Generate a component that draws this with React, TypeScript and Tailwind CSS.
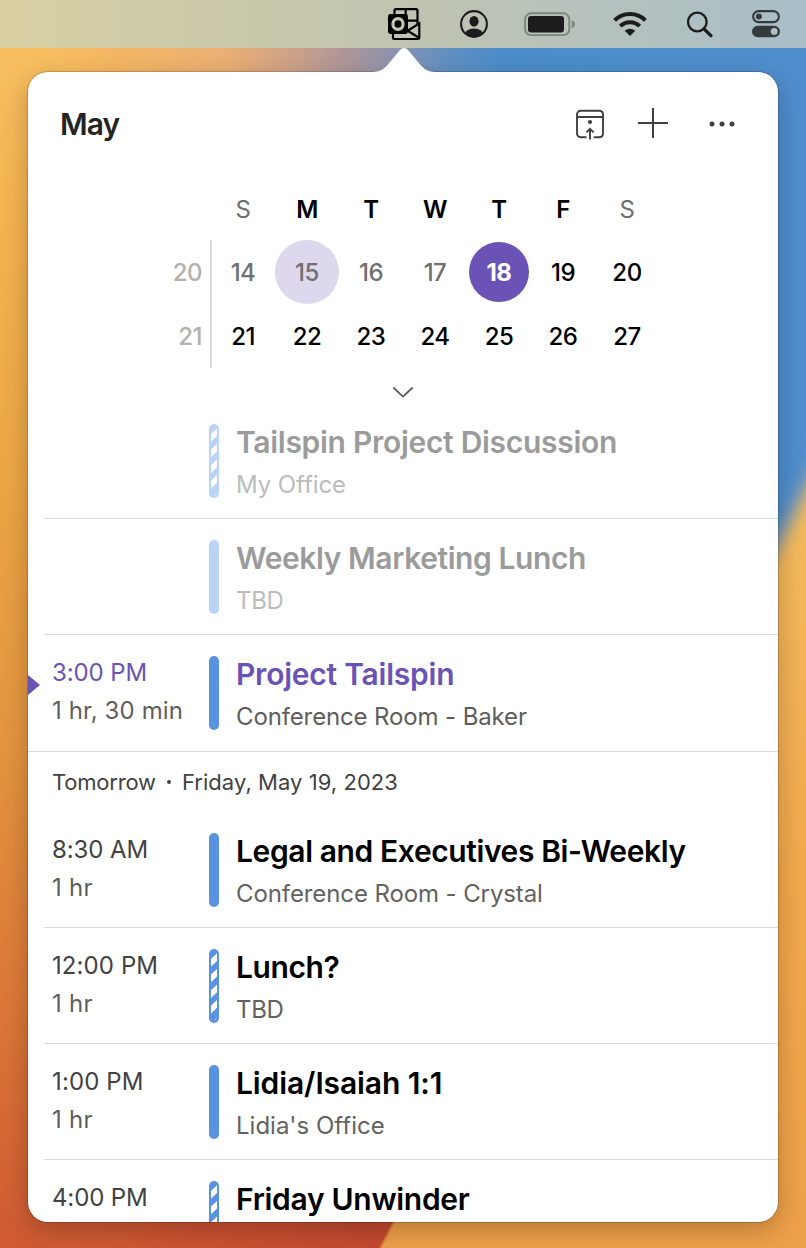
import React from "react";

type Bar = "solid" | "striped";

interface CalendarEvent {
  title: string;
  titleTracking: string;
  place: string;
  placeTracking?: string;
  time?: string;
  timeTracking?: string;
  duration?: string;
  durationTracking?: string;
  bar: Bar;
  state: "past" | "current" | "upcoming";
}

const today: CalendarEvent[] = [
  { title: "Tailspin Project Discussion", titleTracking: "tracking-[-0.29px]", place: "My Office", placeTracking: "tracking-[-0.09px]", bar: "striped", state: "past" },
  { title: "Weekly Marketing Lunch", titleTracking: "tracking-[-0.41px]", place: "TBD", placeTracking: "tracking-[-0.3px]", bar: "solid", state: "past" },
  {
    title: "Project Tailspin", titleTracking: "tracking-[-0.23px]",
    place: "Conference Room - Baker", placeTracking: "tracking-[-0.13px]",
    time: "3:00 PM", timeTracking: "tracking-[-0.1px]",
    duration: "1 hr, 30 min", durationTracking: "tracking-[0.12px]",
    bar: "solid", state: "current",
  },
];

const tomorrow: CalendarEvent[] = [
  {
    title: "Legal and Executives Bi-Weekly", titleTracking: "tracking-[-0.39px]",
    place: "Conference Room - Crystal", placeTracking: "tracking-[-0.1px]",
    time: "8:30 AM", timeTracking: "tracking-[-0.09px]", duration: "1 hr", durationTracking: "tracking-[0.25px]",
    bar: "solid", state: "upcoming",
  },
  {
    title: "Lunch?", titleTracking: "tracking-[-0.4px]",
    place: "TBD", placeTracking: "tracking-[-0.3px]",
    time: "12:00 PM", timeTracking: "tracking-[0.1px]", duration: "1 hr", durationTracking: "tracking-[0.25px]",
    bar: "striped", state: "upcoming",
  },
  {
    title: "Lidia/Isaiah 1:1", titleTracking: "tracking-[-0.1px]",
    place: "Lidia's Office",
    time: "1:00 PM", timeTracking: "tracking-[0.12px]", duration: "1 hr", durationTracking: "tracking-[0.25px]",
    bar: "solid", state: "upcoming",
  },
  {
    title: "Friday Unwinder", titleTracking: "tracking-[-0.3px]",
    place: "",
    time: "4:00 PM", timeTracking: "tracking-[-0.13px]", duration: "",
    bar: "striped", state: "upcoming",
  },
];

function Wallpaper() {
  return (
    <svg className="absolute inset-0" width="806" height="1248" viewBox="0 0 806 1248" aria-hidden="true">
      <defs>
        <linearGradient id="warm" x1="0" y1="0" x2="0" y2="1">
          <stop offset="0" stopColor="#f8c265" />
          <stop offset="0.16" stopColor="#f5b451" />
          <stop offset="0.4" stopColor="#eba544" />
          <stop offset="0.6" stopColor="#e3943f" />
          <stop offset="0.8" stopColor="#dc7838" />
          <stop offset="1" stopColor="#cf5a32" />
        </linearGradient>
        <linearGradient id="top" x1="0" y1="0" x2="1" y2="0">
          <stop offset="0.05" stopColor="#f6bb62" stopOpacity="0" />
          <stop offset="0.14" stopColor="#f4b664" />
          <stop offset="0.28" stopColor="#eab073" />
          <stop offset="0.36" stopColor="#cfa288" />
          <stop offset="0.43" stopColor="#ad9699" />
          <stop offset="0.5" stopColor="#8793b2" />
          <stop offset="0.55" stopColor="#6290c0" />
          <stop offset="0.62" stopColor="#4c8dca" />
          <stop offset="1" stopColor="#4f8ecd" />
        </linearGradient>
        <linearGradient id="sun" x1="0" y1="0" x2="0" y2="1">
          <stop offset="0" stopColor="#f5bd60" />
          <stop offset="0.5" stopColor="#f2a84c" />
          <stop offset="1" stopColor="#ee9f48" />
        </linearGradient>
        <linearGradient id="ember" x1="0" y1="0" x2="1" y2="0">
          <stop offset="0" stopColor="#d05d33" stopOpacity="0" />
          <stop offset="0.3" stopColor="#cc5331" />
          <stop offset="0.9" stopColor="#be452e" />
        </linearGradient>
        <filter id="soft" x="-20%" y="-20%" width="140%" height="140%">
          <feGaussianBlur stdDeviation="9" />
        </filter>
        <filter id="edge">
          <feGaussianBlur stdDeviation="1.2" />
        </filter>
      </defs>
      <rect width="806" height="1248" fill="url(#warm)" />
      <rect x="0" y="0" width="806" height="100" fill="url(#top)" />
      <rect x="600" y="90" width="206" height="560" fill="#4f8dcd" />
      <path d="M700 680 L778 545 L830 440 L860 1300 L700 1300Z" fill="url(#sun)" filter="url(#soft)" />
      <rect x="28" y="1190" width="500" height="58" fill="url(#ember)" />
      <path d="M410 1190 L374 1260 L840 1260 L840 1190Z" fill="#eea048" filter="url(#edge)" />
    </svg>
  );
}

function MenuBar() {
  return (
    <div className="relative flex h-12 items-center justify-end bg-linear-to-r from-[#d8d0a2] via-[#c0c4b0] to-[#a9bec9] pr-[26px] text-[#1c1c1c]">
      <svg className="mr-[39px]" width="34" height="34" viewBox="0 0 34 34" fill="none" stroke="#000" strokeWidth="2.2">
        <path d="M7.5 8V3.7Q7.5 2.2 9 2.2H29Q30.5 2.2 30.5 3.7V17M18.7 2.5V14M18 13.7H30.5" />
        <path d="M6 26V31Q6 32 7 32H31Q32.3 32 32.3 31V16.5L20.5 23.7L32 30.8" />
        <rect x="1" y="7" width="20" height="20" rx="2.4" fill="#000" stroke="none" />
        <ellipse cx="11" cy="17" rx="5.1" ry="5.4" stroke="#c2c6b1" strokeWidth="3.2" />
      </svg>
      <svg className="mr-9" width="28" height="28" viewBox="0 0 28 28">
        <defs>
          <clipPath id="head"><circle cx="14" cy="14" r="12.5" /></clipPath>
        </defs>
        <circle cx="14" cy="14" r="12.9" fill="none" stroke="currentColor" strokeWidth="2.1" />
        <g fill="currentColor" clipPath="url(#head)">
          <ellipse cx="14" cy="11.2" rx="4.6" ry="5.2" />
          <ellipse cx="14" cy="25.3" rx="9.8" ry="6.9" />
        </g>
      </svg>
      <svg className="mr-9" width="52" height="26" viewBox="0 0 52 26">
        <rect x="1.1" y="2.3" width="44.2" height="21.8" rx="6" fill="none" stroke="#7d857d" strokeWidth="1.9" />
        <rect x="4" y="5" width="36" height="16.4" rx="3" fill="currentColor" />
        <path d="M47.8 9.2Q51 10.5 51 13.2T47.8 17.2Z" fill="#7d857d" />
      </svg>
      <svg className="mr-[38px]" width="36" height="26" viewBox="0 0 36 26" fill="none" stroke="currentColor" strokeWidth="4">
        <path d="M2.6 9.4A21.8 21.8 0 0 1 33.4 9.4" />
        <path d="M8.3 15.2A13.7 13.7 0 0 1 27.7 15.2" />
        <path d="M18 25L12.7 19.7Q18 15.6 23.3 19.7Z" fill="currentColor" stroke="none" />
      </svg>
      <svg className="mr-[38px]" width="28" height="28" viewBox="0 0 28 28" fill="none" stroke="currentColor">
        <circle cx="11.3" cy="12" r="9.3" strokeWidth="2.3" />
        <path d="M18 18.8L24.9 25.7" strokeWidth="3.3" strokeLinecap="round" />
      </svg>
      <svg width="28" height="28" viewBox="0 0 28 28" className="text-[#353b3d]">
        <rect x="1.1" y="1.1" width="25.8" height="11" rx="5.5" fill="none" stroke="currentColor" strokeWidth="2.1" />
        <circle cx="6.9" cy="6.6" r="3" fill="currentColor" />
        <rect x="0" y="15.7" width="28" height="11.5" rx="5.75" fill="currentColor" />
        <circle cx="22.2" cy="21.4" r="3.4" fill="#b0c0c4" />
      </svg>
    </div>
  );
}

function PanelHeader() {
  return (
    <header className="flex h-26 shrink-0 items-center justify-between pr-[42px] pl-8 text-[#3f3f3f]">
      <h1 className="text-[30px] leading-9 font-semibold tracking-[-1px] text-[#242424]">May</h1>
      <div className="flex items-center">
        <svg className="mr-[33px]" width="30" height="32" viewBox="0 0 30 32" fill="none" stroke="currentColor" strokeWidth="1.9">
          <path d="M11.5 29.2H6Q2 29.2 2 25.2V6.8Q2 2.8 6 2.8H24Q28 2.8 28 6.8V25.2Q28 29.2 24 29.2H18.7M2 9H28" />
          <path d="M15 31.5V21.2M11.4 24.4L15 20.8L18.6 24.4" />
          <circle cx="15" cy="14" r="2.1" fill="currentColor" stroke="none" />
        </svg>
        <svg className="mr-10" width="30" height="32" viewBox="0 0 30 32" stroke="currentColor" strokeWidth="2">
          <path d="M0 15H30M15 0V30" />
        </svg>
        <svg width="28" height="32" viewBox="0 0 28 32" fill="currentColor">
          <circle cx="4" cy="16" r="2.5" />
          <circle cx="14" cy="16" r="2.5" />
          <circle cx="24" cy="16" r="2.5" />
        </svg>
      </div>
    </header>
  );
}

function Week({ number, children }: { number: number; children: React.ReactNode }) {
  return (
    <div className="flex h-16">
      <div className="flex w-[184px] items-center justify-end border-r-2 border-[#dcdcdc] pt-0.5 pr-2 text-[#b3b0ad]">{number}</div>
      <div className="-ml-px grid grid-cols-[repeat(7,64px)] place-items-center *:pt-0.5">{children}</div>
    </div>
  );
}

function MonthGrid() {
  return (
    <section className="shrink-0 text-[24px] leading-none font-medium tracking-[-0.5px] text-black">
      <div className="ml-[183px] grid h-16 grid-cols-[repeat(7,64px)] place-items-center pt-[3px] font-semibold">
        <span className="font-normal text-[#6e6e6e]">S</span>
        <span>M</span>
        <span>T</span>
        <span>W</span>
        <span>T</span>
        <span>F</span>
        <span className="font-normal text-[#6e6e6e]">S</span>
      </div>
      <Week number={20}>
        <span className="font-[450] text-[#707070]">14</span>
        <span className="flex size-16 items-center justify-center rounded-full bg-[#ddd8ee] font-[450] text-[#707070]">15</span>
        <span className="font-[450] text-[#707070]">16</span>
        <span className="font-[450] text-[#707070]">17</span>
        <span className="flex size-15 items-center justify-center rounded-full bg-[#6b53b5] font-bold text-white">18</span>
        <span>19</span>
        <span>20</span>
      </Week>
      <Week number={21}>
        <span>21</span>
        <span>22</span>
        <span>23</span>
        <span>24</span>
        <span>25</span>
        <span>26</span>
        <span>27</span>
      </Week>
      <div className="flex h-[35px] items-start justify-center pt-[18px]">
        <svg width="22" height="12" viewBox="0 0 22 12" fill="none" stroke="#5c5c5c" strokeWidth="1.8">
          <path d="M1.3 1.5L11 10.6L20.7 1.5" />
        </svg>
      </div>
    </section>
  );
}

const stripeStarts = [0, 15.6, 31.2, 46.8];

function EventBar({ kind, past }: { kind: Bar; past: boolean }) {
  return (
    <svg
      className={past ? "mt-[21px] shrink-0 text-[#bbd3f5]" : "mt-[21px] shrink-0 text-[#5893e0]"}
      width="10"
      height="74"
      viewBox="0 0 10 74"
    >
      <rect width="10" height="74" rx="5" fill="currentColor" />
      {kind === "striped" && (
        <g fill="#fff">
          {stripeStarts.map((y) => (
            <path key={y} d={`M2 ${y + 10}L8 ${y + 4.3}V${y + 12}L2 ${y + 17.7}Z`} />
          ))}
          <path d="M5.2 71.8Q7.3 71 7.6 68.8Z" />
        </g>
      )}
    </svg>
  );
}

const titleColor = { past: "text-[#9b9b9b]", current: "text-[#6b53b5]", upcoming: "text-black" };
const placeColor = { past: "text-[#bcbcbc]", current: "text-[#5e5d5c]", upcoming: "text-[#636261]" };
const timeColor = { past: "", current: "text-[#6b53b5]", upcoming: "text-[#424242]" };

function EventRow({ event, last = false }: { event: CalendarEvent; last?: boolean }) {
  return (
    <li className={last ? "flex h-29 shrink-0 pl-6" : "relative flex h-29 shrink-0 pl-6 after:absolute after:right-0 after:bottom-0 after:left-4 after:h-px after:bg-[#dcdcdc]"}>
      <div className="w-[157px] shrink-0 pt-[19px] text-[24px] leading-[38px] whitespace-nowrap">
        <div className={`${timeColor[event.state]} ${event.timeTracking ?? ""}`}>{event.time}</div>
        <div className={`text-[#605e5c] ${event.durationTracking ?? ""}`}>{event.duration}</div>
      </div>
      <EventBar kind={event.bar} past={event.state === "past"} />
      <div className="ml-[17px] pt-5 whitespace-nowrap">
        <h2 className={`text-[30px] leading-[38px] font-semibold ${titleColor[event.state]} ${event.titleTracking}`}>{event.title}</h2>
        <p className={`mt-[9px] text-[24px] leading-[30px] ${placeColor[event.state]} ${event.placeTracking ?? ""}`}>{event.place}</p>
      </div>
    </li>
  );
}

export default function App() {
  return (
    <div className="relative h-[1248px] w-[806px] overflow-hidden bg-[#e8a045] font-['Inter',sans-serif]">
      <Wallpaper />
      <MenuBar />
      <div className="relative mx-7 mt-6">
        <main className="flex h-[1150px] flex-col overflow-hidden rounded-[20px] bg-white shadow-[0_0_0_1px_rgba(0,0,0,0.16),0_8px_26px_rgba(0,0,0,0.24)]">
          <PanelHeader />
          <MonthGrid />
          <ul className="flex shrink-0 flex-col">
            {today.map((event, i) => (
              <EventRow key={event.title} event={event} last={i === today.length - 1} />
            ))}
          </ul>
          <h3 className="flex h-[61px] shrink-0 items-center border-t border-[#dcdcdc] pl-6 text-[22px] text-[#424242]">
            <span className="tracking-[-0.2px]">Tomorrow</span>
            <span className="mx-[11px] size-1 rounded-full bg-[#424242]" />
            <span className="tracking-[0.05px]">Friday, May 19, 2023</span>
          </h3>
          <ul className="flex shrink-0 flex-col">
            {tomorrow.map((event, i) => (
              <EventRow key={event.title} event={event} last={i === tomorrow.length - 1} />
            ))}
          </ul>
        </main>
        <svg className="absolute -top-6 left-[344px]" width="64" height="25" viewBox="0 0 64 25" fill="#fff">
          <path d="M0 25V24C10 24 14 19 18 14L28 2Q32 -1.8 36 2L46 14C50 19 54 24 64 24V25Z" />
        </svg>
        <svg className="absolute top-[603px] left-0" width="12" height="20" viewBox="0 0 12 20" fill="#6b53b5">
          <path d="M0 0L12 10L0 20Z" />
        </svg>
      </div>
    </div>
  );
}
